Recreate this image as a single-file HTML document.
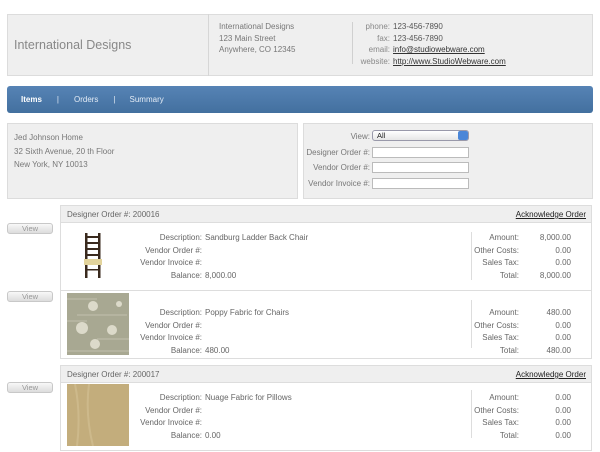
<!DOCTYPE html>
<html><head><meta charset="utf-8"><style>
*{margin:0;padding:0;box-sizing:border-box}
body{width:600px;height:452px;background:#fff;font-family:"Liberation Sans",Arial,sans-serif;color:#666;font-size:8px;position:relative;overflow:hidden}
.a{position:absolute;white-space:nowrap}
.box{position:absolute;background:#efefef;border:1px solid #dcdcdc}
.r{text-align:right}
u{color:#333}
.btn{position:absolute;left:7px;width:46px;height:11px;border:1px solid #c8c8c8;border-radius:3px;background:linear-gradient(#f8f8f8,#dcdcdc);font-size:7.5px;color:#999;text-align:center;line-height:9px}
.inp{position:absolute;left:372px;width:97px;height:11px;background:#fff;border:1px solid #bbb}
.sec{position:absolute;left:60px;width:532px;border:1px solid #ddd;background:#fff}
.hdr{position:absolute;left:0;top:0;width:100%;height:17px;background:#efefef;border-bottom:1px solid #ddd}
</style></head><body>
<div class="box" style="left:7px;top:14px;width:586px;height:62px"></div>
<div class="a" style="left:208px;top:14px;width:1px;height:62px;background:#d6d6d6"></div>
<div class="a" style="left:352px;top:22px;width:1px;height:42px;background:#d0d0d0"></div>
<div class="a" style="left:14px;top:38px;font-size:12.5px;color:#888">International Designs</div>
<div class="a" style="left:219px;top:21px;line-height:11.5px;color:#777">International Designs<br>123 Main Street<br>Anywhere, CO 12345</div>
<div class="a r" style="left:340px;width:50px;top:21px;line-height:11.5px;color:#888">phone:<br>fax:<br>email:<br>website:</div>
<div class="a" style="left:393px;top:21px;line-height:11.5px;color:#555">123-456-7890<br>123-456-7890<br><u>info@studiowebware.com</u><br><u>http://www.StudioWebware.com</u></div>

<div class="a" style="left:7px;top:86px;width:586px;height:27px;background:linear-gradient(#5683b5,#43709f);border-radius:3px"></div>
<div class="a" style="left:21px;top:95px;color:#fff;font-size:8px;word-spacing:0"><b>Items</b><span style="color:#dfe8f3;margin-left:15px">|</span><span style="color:#e3ebf5;margin-left:15px">Orders</span><span style="color:#dfe8f3;margin-left:15px">|</span><span style="color:#e3ebf5;margin-left:14px">Summary</span></div>

<div class="box" style="left:7px;top:123px;width:291px;height:76px"></div>
<div class="a" style="left:14px;top:131px;line-height:13.5px;color:#777">Jed Johnson Home<br>32 Sixth Avenue, 20 th Floor<br>New York, NY 10013</div>
<div class="box" style="left:303px;top:123px;width:290px;height:76px"></div>
<div class="a r" style="left:300px;width:70px;top:129px;line-height:15.5px;color:#777">View:<br>Designer Order #:<br>Vendor Order #:<br>Vendor Invoice #:</div>
<div class="a" style="left:372px;top:130px;width:97px;height:11px;border:1px solid #99a;border-radius:3px;background:linear-gradient(#fff,#e6e6e6);font-size:7.5px;color:#222;padding-left:4px;line-height:9px"><b style="font-weight:normal">All</b><span style="position:absolute;right:0;top:0;width:10px;height:9px;background:#4a86d8;border-radius:2px"></span></div>
<div class="inp" style="top:147px"></div>
<div class="inp" style="top:162px"></div>
<div class="inp" style="top:178px"></div>

<div class="btn" style="top:223px">View</div>
<div class="btn" style="top:291px">View</div>
<div class="btn" style="top:382px">View</div>

<div class="sec" style="top:205px;height:154px">
 <div class="hdr"></div>
 <div class="a" style="left:6px;top:4px">Designer Order #: 200016</div>
 <div class="a" style="right:5px;top:4px;color:#222;text-decoration:underline">Acknowledge Order</div>
 <div class="a" style="left:0;top:84px;width:100%;height:1px;background:#ddd"></div>
</div>
<div class="sec" style="top:365px;height:86px">
 <div class="hdr"></div>
 <div class="a" style="left:6px;top:4px">Designer Order #: 200017</div>
 <div class="a" style="right:5px;top:4px;color:#222;text-decoration:underline">Acknowledge Order</div>
</div>

<svg class="a" style="left:82px;top:233px" width="24" height="45" viewBox="0 0 24 45">
<g fill="#3a2a1e"><rect x="3" y="0" width="2.5" height="45"/><rect x="16" y="0" width="2.5" height="45"/>
<rect x="3" y="3" width="15" height="2"/><rect x="3" y="9" width="15" height="2"/><rect x="3" y="15" width="15" height="2"/><rect x="3" y="21" width="15" height="2"/>
<rect x="3" y="36" width="15" height="1.5"/></g>
<rect x="2" y="26" width="18" height="6" fill="#e3d49c"/>
</svg>
<svg class="a" style="left:67px;top:293px" width="62" height="62"><rect width="62" height="62" fill="#a8a892"/>
<g fill="#e6e3d4" opacity=".85"><circle cx="26" cy="13" r="5"/><circle cx="15" cy="35" r="6"/><circle cx="45" cy="37" r="5"/><circle cx="28" cy="51" r="5"/><circle cx="52" cy="11" r="3"/></g>
<g stroke="#d4d2c0" stroke-width="1" opacity=".6"><path d="M0 6h30M10 22h50M0 28h20M30 46h32M0 58h62"/></g></svg>
<svg class="a" style="left:67px;top:384px" width="62" height="62"><rect width="62" height="62" fill="#c3ad7c"/><path d="M8 0q6 30 2 62M22 0q-4 30 4 62" stroke="#d3c196" stroke-width="2" fill="none" opacity=".6"/></svg>

<div class="a r" style="left:120px;width:82px;top:232px;line-height:12.5px">Description:<br>Vendor Order #:<br>Vendor Invoice #:<br>Balance:</div>
<div class="a" style="left:205px;top:232px;line-height:12.5px">Sandburg Ladder Back Chair<br><br><br>8,000.00</div>
<div class="a r" style="left:120px;width:82px;top:307px;line-height:12.5px">Description:<br>Vendor Order #:<br>Vendor Invoice #:<br>Balance:</div>
<div class="a" style="left:205px;top:307px;line-height:12.5px">Poppy Fabric for Chairs<br><br><br>480.00</div>
<div class="a r" style="left:120px;width:82px;top:392px;line-height:12.5px">Description:<br>Vendor Order #:<br>Vendor Invoice #:<br>Balance:</div>
<div class="a" style="left:205px;top:392px;line-height:12.5px">Nuage Fabric for Pillows<br><br><br>0.00</div>

<div class="a" style="left:471px;top:232px;width:1px;height:48px;background:#ddd"></div>
<div class="a" style="left:471px;top:300px;width:1px;height:48px;background:#ddd"></div>
<div class="a" style="left:471px;top:390px;width:1px;height:48px;background:#ddd"></div>
<div class="a r" style="left:460px;width:59px;top:232px;line-height:12.5px">Amount:<br>Other Costs:<br>Sales Tax:<br>Total:</div>
<div class="a r" style="left:520px;width:51px;top:232px;line-height:12.5px">8,000.00<br>0.00<br>0.00<br>8,000.00</div>
<div class="a r" style="left:460px;width:59px;top:307px;line-height:12.5px">Amount:<br>Other Costs:<br>Sales Tax:<br>Total:</div>
<div class="a r" style="left:520px;width:51px;top:307px;line-height:12.5px">480.00<br>0.00<br>0.00<br>480.00</div>
<div class="a r" style="left:460px;width:59px;top:392px;line-height:12.5px">Amount:<br>Other Costs:<br>Sales Tax:<br>Total:</div>
<div class="a r" style="left:520px;width:51px;top:392px;line-height:12.5px">0.00<br>0.00<br>0.00<br>0.00</div>
</body></html>
